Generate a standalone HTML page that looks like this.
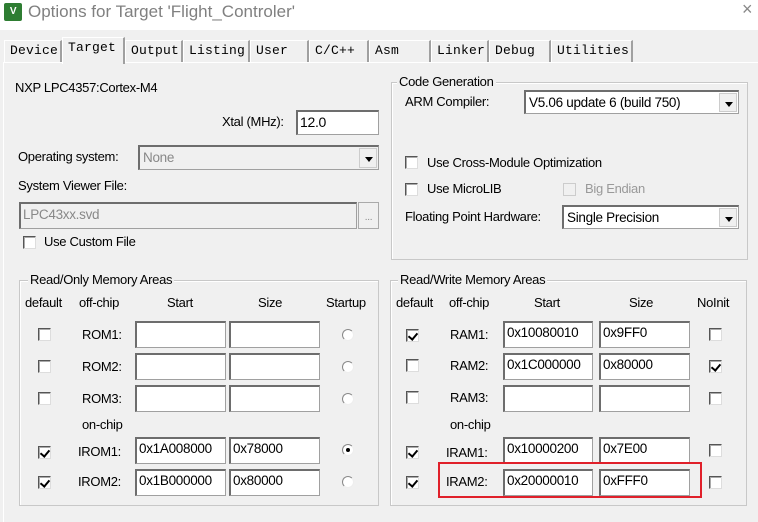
<!DOCTYPE html>
<html><head><meta charset="utf-8"><style>
*{margin:0;padding:0;box-sizing:border-box}
body{width:758px;height:514px;background:#f0f0f0;position:relative;overflow:hidden;font-family:"Liberation Sans",Arial,sans-serif;font-size:13px;color:#000;letter-spacing:-0.3px}
.a{position:absolute;white-space:nowrap}
.t{position:absolute;white-space:nowrap;line-height:16px}
.in{position:absolute;background:#fff;border:1px solid #a0a0a0;border-top:2px solid #6d6d6d;border-left:2px solid #6d6d6d;padding:2px 2px;line-height:16px;font-size:13.5px}
.cb{position:absolute;width:13px;height:13px;background:#fff;border:1px solid #555;border-right-color:#ddd;border-bottom-color:#ddd;box-shadow:inset 1px 1px 0 #aaa}
.cb.k::after{content:"";position:absolute;left:3px;top:1px;width:4px;height:7px;border:solid #000;border-width:0 2px 2px 0;transform:rotate(40deg)}
.rd{position:absolute;width:12px;height:12px;border-radius:50%;border:1px solid #888;border-right-color:#eee;border-bottom-color:#eee;background:#fff}
.rd.k::after{content:"";position:absolute;left:3px;top:3px;width:4px;height:4px;border-radius:50%;background:#000}
.grp{position:absolute;border:1px solid #c8c8c8;box-shadow:inset 1px 1px 0 #fff}
.gl{position:absolute;background:#f0f0f0;padding:0 2px;line-height:14px}
.tab{position:absolute;top:40px;height:23px;border:1px solid #fff;border-right:2px solid #a0a0a0;border-bottom:none;font-family:"Liberation Mono",monospace;font-size:13px;padding:2px 0 0 5px;letter-spacing:0.2px}
.sel{position:absolute;background:#fff;border:1px solid #a0a0a0;border-top:2px solid #6d6d6d;border-left:2px solid #6d6d6d;padding:2px 3px;line-height:17px;font-size:13.5px}
.arr{position:absolute;right:1px;top:1px;bottom:1px;width:18px;background:#f0f0f0;border:1px solid #ccc}
.arr::after{content:"";position:absolute;left:5px;top:8px;border:4px solid transparent;border-top:5px solid #000}
</style></head><body>
<div class="a" style="left:0;top:0;width:758px;height:30px;background:#fff"></div>
<div class="a" style="left:4px;top:3px;width:18px;height:18px;background:#2e7d32;border-radius:2px;color:#fff;font-size:10px;font-weight:bold;line-height:18px;text-align:center">V</div>
<div class="t" style="left:28px;top:1px;font-size:17px;color:#808080;line-height:22px;letter-spacing:0">Options for Target 'Flight_Controler'</div>
<div class="t" style="left:742px;top:1px;font-size:18px;color:#888">×</div>

<div class="tab" style="left:4px;width:58px">Device</div>
<div class="tab" style="left:62px;width:63px;top:37px;height:27px;background:#f0f0f0;z-index:2;border-bottom:none">Target</div>
<div class="tab" style="left:125px;width:58px">Output</div>
<div class="tab" style="left:183px;width:67px">Listing</div>
<div class="tab" style="left:250px;width:59px">User</div>
<div class="tab" style="left:309px;width:60px">C/C++</div>
<div class="tab" style="left:369px;width:62px">Asm</div>
<div class="tab" style="left:431px;width:58px">Linker</div>
<div class="tab" style="left:489px;width:62px">Debug</div>
<div class="tab" style="left:551px;width:82px">Utilities</div>
<div class="a" style="left:3px;top:62px;width:760px;height:460px;border-left:1px solid #fff;border-top:1px solid #fff"></div>

<div class="t" style="left:15px;top:80px">NXP LPC4357:Cortex-M4</div>
<div class="t" style="left:222px;top:114px">Xtal (MHz):</div>
<div class="in" style="left:296px;top:110px;width:83px;height:25px;font-size:14px">12.0</div>
<div class="t" style="left:18px;top:149px">Operating system:</div>
<div class="sel" style="left:138px;top:145px;width:241px;height:25px;background:#f0f0f0;color:#888">None<div class="arr" style="background:#f0f0f0"></div></div>
<div class="t" style="left:18px;top:178px">System Viewer File:</div>
<div class="in" style="left:19px;top:202px;width:338px;height:27px;background:#f0f0f0;color:#888;padding-top:3px">LPC43xx.svd</div>
<div class="a" style="left:358px;top:202px;width:21px;height:27px;border:1px solid #aaa;background:#f0f0f0;color:#888;text-align:center;font-size:10px;line-height:30px">...</div>
<div class="cb" style="left:23px;top:236px"></div>
<div class="t" style="left:44px;top:234px">Use Custom File</div>

<div class="grp" style="left:391px;top:82px;width:357px;height:178px"></div>
<div class="gl" style="left:397px;top:75px">Code Generation</div>
<div class="t" style="left:405px;top:94px">ARM Compiler:</div>
<div class="sel" style="left:524px;top:90px;width:215px;height:24px">V5.06 update 6 (build 750)<div class="arr"></div></div>
<div class="cb" style="left:405px;top:156px"></div>
<div class="t" style="left:427px;top:155px">Use Cross-Module Optimization</div>
<div class="cb" style="left:405px;top:183px"></div>
<div class="t" style="left:427px;top:181px">Use MicroLIB</div>
<div class="cb" style="left:563px;top:183px;border-color:#ccc;box-shadow:none;background:#f0f0f0"></div>
<div class="t" style="left:585px;top:181px;color:#999">Big Endian</div>
<div class="t" style="left:405px;top:209px">Floating Point Hardware:</div>
<div class="sel" style="left:562px;top:205px;width:177px;height:24px">Single Precision<div class="arr"></div></div>

<div class="grp" style="left:19px;top:280px;width:360px;height:226px"></div>
<div class="gl" style="left:28px;top:273px">Read/Only Memory Areas</div>
<div class="t" style="left:25px;top:295px">default</div>
<div class="t" style="left:79px;top:295px">off-chip</div>
<div class="t" style="left:167px;top:295px">Start</div>
<div class="t" style="left:258px;top:295px">Size</div>
<div class="t" style="left:326px;top:295px">Startup</div>

<div class="cb" style="left:38px;top:328px"></div><div class="t" style="left:82px;top:327px">ROM1:</div>
<div class="in" style="left:135px;top:321px;width:91px;height:27px"></div><div class="in" style="left:229px;top:321px;width:91px;height:27px"></div><div class="rd" style="left:342px;top:329px"></div>
<div class="cb" style="left:38px;top:360px"></div><div class="t" style="left:82px;top:359px">ROM2:</div>
<div class="in" style="left:135px;top:353px;width:91px;height:27px"></div><div class="in" style="left:229px;top:353px;width:91px;height:27px"></div><div class="rd" style="left:342px;top:361px"></div>
<div class="cb" style="left:38px;top:392px"></div><div class="t" style="left:82px;top:391px">ROM3:</div>
<div class="in" style="left:135px;top:385px;width:91px;height:27px"></div><div class="in" style="left:229px;top:385px;width:91px;height:27px"></div><div class="rd" style="left:342px;top:393px"></div>
<div class="t" style="left:82px;top:417px">on-chip</div>
<div class="cb k" style="left:38px;top:446px"></div><div class="t" style="left:78px;top:444px">IROM1:</div>
<div class="in" style="left:135px;top:437px;width:91px;height:27px">0x1A008000</div><div class="in" style="left:229px;top:437px;width:91px;height:27px">0x78000</div><div class="rd k" style="left:342px;top:444px"></div>
<div class="cb k" style="left:38px;top:476px"></div><div class="t" style="left:78px;top:474px">IROM2:</div>
<div class="in" style="left:135px;top:469px;width:91px;height:27px">0x1B000000</div><div class="in" style="left:229px;top:469px;width:91px;height:27px">0x80000</div><div class="rd" style="left:342px;top:476px"></div>

<div class="grp" style="left:390px;top:280px;width:357px;height:226px"></div>
<div class="gl" style="left:398px;top:273px">Read/Write Memory Areas</div>
<div class="t" style="left:396px;top:295px">default</div>
<div class="t" style="left:449px;top:295px">off-chip</div>
<div class="t" style="left:534px;top:295px">Start</div>
<div class="t" style="left:629px;top:295px">Size</div>
<div class="t" style="left:697px;top:295px">NoInit</div>

<div class="cb k" style="left:406px;top:329px"></div><div class="t" style="left:450px;top:327px">RAM1:</div>
<div class="in" style="left:503px;top:321px;width:90px;height:27px">0x10080010</div><div class="in" style="left:599px;top:321px;width:91px;height:27px">0x9FF0</div><div class="cb" style="left:709px;top:328px"></div>
<div class="cb" style="left:406px;top:359px"></div><div class="t" style="left:450px;top:358px">RAM2:</div>
<div class="in" style="left:503px;top:353px;width:90px;height:27px">0x1C000000</div><div class="in" style="left:599px;top:353px;width:91px;height:27px">0x80000</div><div class="cb k" style="left:709px;top:360px"></div>
<div class="cb" style="left:406px;top:391px"></div><div class="t" style="left:450px;top:390px">RAM3:</div>
<div class="in" style="left:503px;top:385px;width:90px;height:27px"></div><div class="in" style="left:599px;top:385px;width:91px;height:27px"></div><div class="cb" style="left:709px;top:392px"></div>
<div class="t" style="left:450px;top:417px">on-chip</div>
<div class="cb k" style="left:406px;top:446px"></div><div class="t" style="left:446px;top:445px">IRAM1:</div>
<div class="in" style="left:503px;top:437px;width:90px;height:27px">0x10000200</div><div class="in" style="left:599px;top:437px;width:91px;height:27px">0x7E00</div><div class="cb" style="left:709px;top:444px"></div>
<div class="cb k" style="left:406px;top:476px"></div><div class="t" style="left:446px;top:474px">IRAM2:</div>
<div class="in" style="left:503px;top:469px;width:90px;height:27px">0x20000010</div><div class="in" style="left:599px;top:469px;width:91px;height:27px">0xFFF0</div><div class="cb" style="left:709px;top:476px"></div>
<div class="a" style="left:438px;top:462px;width:264px;height:36px;border:2px solid #e0202a"></div>
</body></html>
